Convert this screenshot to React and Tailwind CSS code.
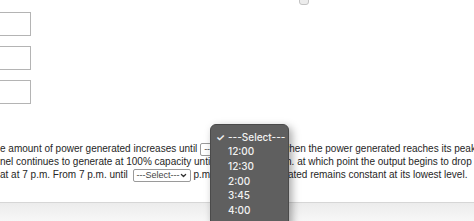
const options = ['12:00', '12:30', '2:00', '3:45', '4:00']

function SelectBox({ className = '' }) {
  return (
    <span
      className={`inline-flex items-center justify-between -my-[2px] h-[13px] pl-[3px] pr-[3px] align-middle border border-[#9a9a9a] rounded-[2px] bg-white text-[9px] leading-none text-[#444] ${className}`}
    >
      <span>---Select---</span>
      <svg className="w-[7px] h-[7px]" viewBox="0 0 10 10" fill="none" stroke="#333" strokeWidth="1.8" strokeLinecap="round" strokeLinejoin="round">
        <path d="M2 3.5l3 3 3-3" />
      </svg>
    </span>
  )
}

export default function App() {
  return (
    <div
      className="relative w-[474px] h-[221px] overflow-hidden bg-white flex flex-col"
      style={{ fontFamily: '"Liberation Sans", Arial, sans-serif' }}
    >
      {/* partly visible glyph at the top */}
      <div className="absolute left-[299px] -top-[3px] w-[10px] h-[8px] rounded-b-[3px] border border-[#c4c4c4] bg-[#ececec]" />

      <div className="flex flex-col gap-[10px] pt-[12px] -ml-[9px]">
        <div className="w-[40px] h-[24px] border border-[#b4b4b4]" />
        <div className="w-[40px] h-[24px] border border-[#b4b4b4]" />
        <div className="w-[40px] h-[24px] border border-[#b4b4b4]" />
      </div>

      <div className="mt-[38px] text-[10px] leading-[13px] text-[#262626] whitespace-nowrap">
        <div className="h-[13px]">
          e amount of power generated increases until <SelectBox className="w-[79px]" /> when the power generated reaches its peak
        </div>
        <div className="h-[13px]">
          nel continues to generate at 100% capacity until <SelectBox className="w-[57px]" /> p.m. at which point the output begins to drop
        </div>
        <div className="h-[13px]">
          at at 7 p.m. From 7 p.m. until <SelectBox className="ml-[2px] w-[58px]" /> p.m. the power generated remains constant at its lowest level.
        </div>
      </div>

      <div className="flex-1" />
      <div className="h-[19px] border-t border-[#d6d6d6] bg-gradient-to-b from-[#ececec] to-[#f7f7f7]" />

      <div
        className="absolute left-[210px] top-[124px] w-[79px] h-[104px] rounded-[6px] bg-[#5f5f5f] border border-[#4a4a4a] shadow-[3px_3px_8px_rgba(0,0,0,0.35)] pt-[5px] text-[10px] text-[#f2f2f2] font-medium"
        style={{ fontFamily: 'Inter, "Liberation Sans", sans-serif' }}
      >
        <div className="flex items-center h-[14.6px]">
          <span className="w-[17px] pl-[5px] text-[10px] font-bold">✓</span>
          <span>---Select---</span>
        </div>
        {options.map((opt) => (
          <div key={opt} className="flex items-center h-[14.6px] pl-[17px]">
            {opt}
          </div>
        ))}
      </div>
    </div>
  )
}
